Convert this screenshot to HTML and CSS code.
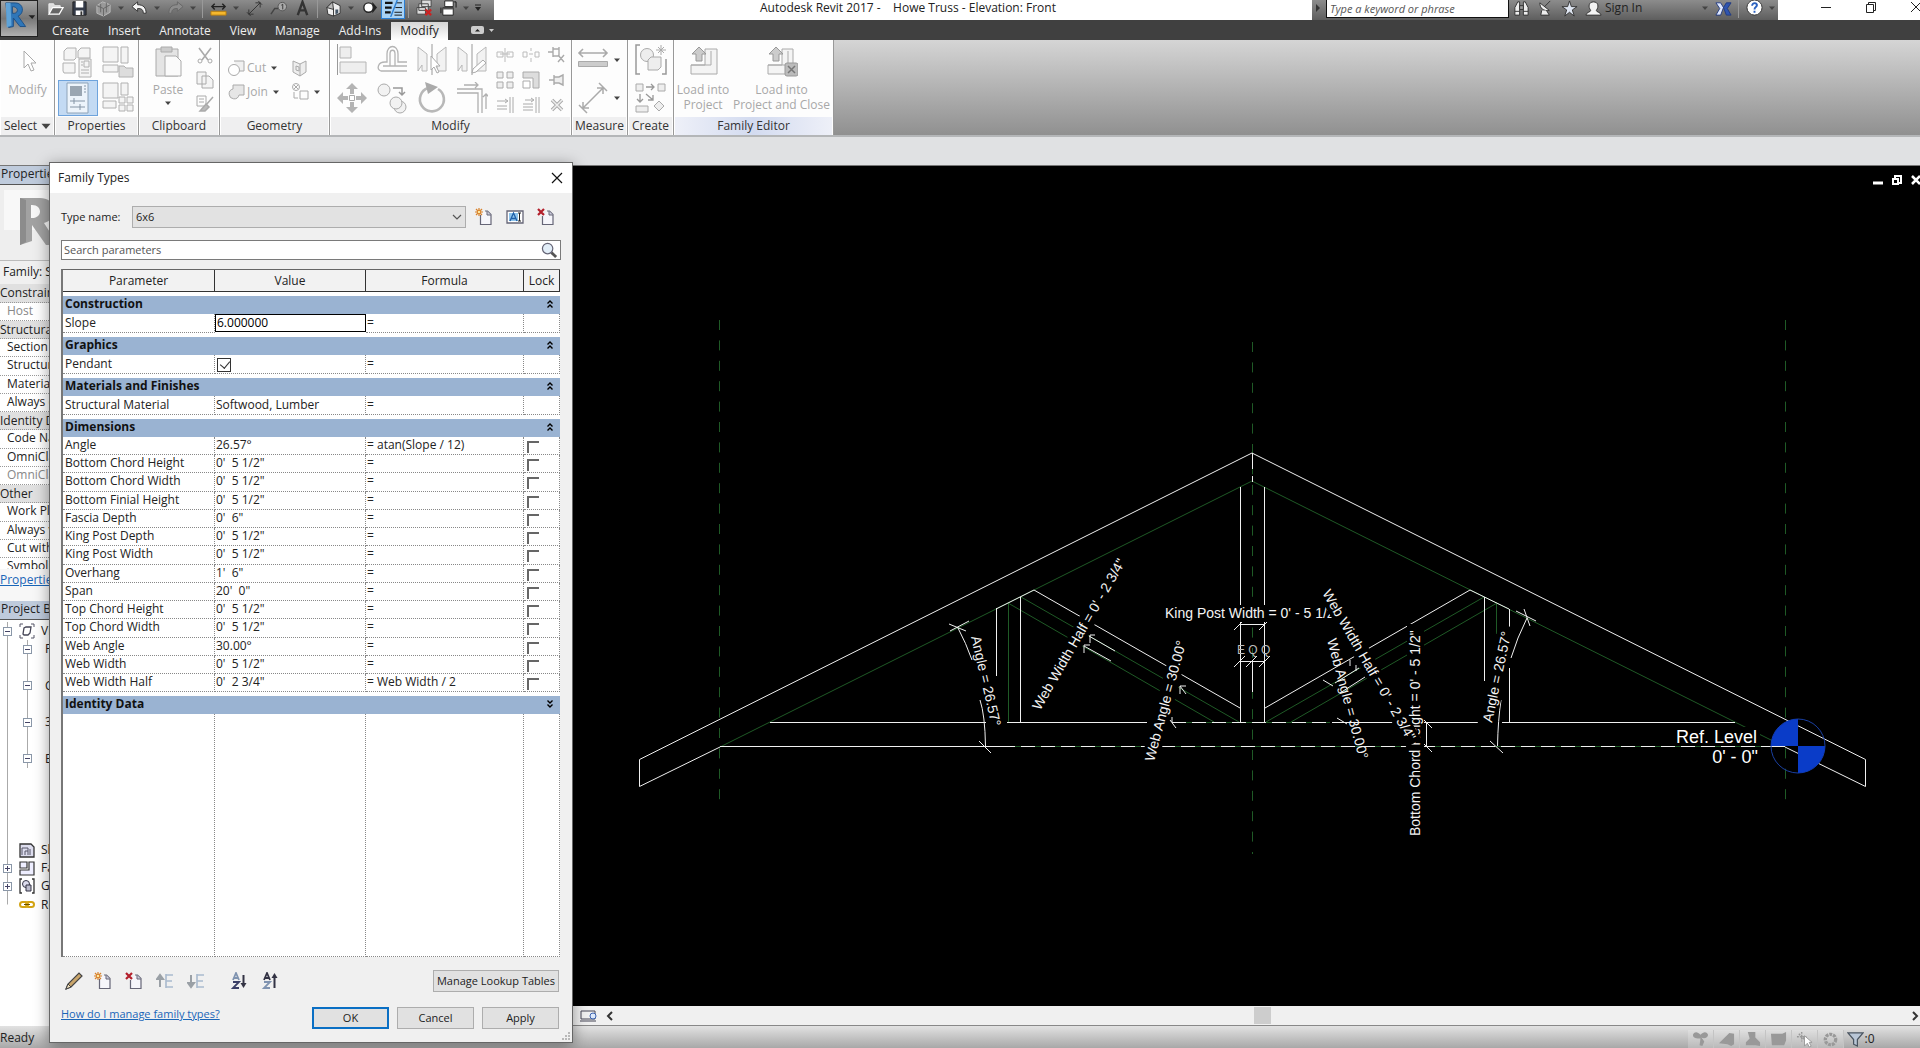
FILE: index.html
```html
<!DOCTYPE html>
<html lang="en">
<head>
    <meta charset="UTF-8">
    <meta name="viewport" content="width=device-width, initial-scale=1.0">
    <title>Autodesk Revit 2017 - Howe Truss - Elevation: Front</title>
    <link rel="stylesheet" href="styles.css">
</head>
<body>
    <!-- shared icons -->
    <svg class="sprite" aria-hidden="true">
        <symbol id="down" viewBox="0 0 8 8"><path d="M1 2.5h6L4 6z" fill="currentColor"/></symbol>
        <symbol id="new" viewBox="0 0 18 18"><path d="M5.500 7v9.500h10.500V6.500L12.500 3H10" fill="#f6f6fb" stroke="#667" stroke-width="1.200"/><path d="M12 3v4h4" fill="#ccd" stroke="#667"/><path d="M4 0v8M0 4h8M1 1l6 6M7 1L1 7" stroke="#d9822b" stroke-width="1.200"/><circle cx="4" cy="4" r="1.800" fill="#ffe9a0" stroke="#d9822b"/></symbol>
        <symbol id="del" viewBox="0 0 18 18"><path d="M5.500 8v8.500h10.500V6.500L12.500 3H10" fill="#f6f6fb" stroke="#667" stroke-width="1.200"/><path d="M12 3v4h4" fill="#ccd" stroke="#667"/><path d="M1 1l6 6M7 1L1 7" stroke="#b3202c" stroke-width="2.200"/></symbol>
        <symbol id="chev" viewBox="0 0 8 10"><path d="M1.500 4.500L4 2l2.500 2.500M1.500 8.500L4 6l2.500 2.500" fill="none" stroke="#000" stroke-width="1.400"/></symbol>
    </svg>

    <header class="titlebar">
        <div class="quick">
            <button class="q" aria-label="Open"><svg viewBox="0 0 18 18"><path d="M2 14V4h5l1 2h6v2" fill="#ddd" stroke="#eee"/><path d="M2 15l4-7h11l-4 7z" fill="#666" stroke="#fff" stroke-width="1.300"/></svg></button>
            <button class="q" aria-label="Save"><svg viewBox="0 0 18 18"><path d="M2 2h14v14H2z" fill="#333a48" stroke="#222"/><path d="M5 1h8v7H5zM5 11h8v5H5z" fill="#fff"/><path d="M10 12h2v4h-2z" fill="#333"/></svg></button>
            <button class="q dim" aria-label="Synchronize"><svg viewBox="0 0 18 18"><path d="M2 6l6-4 8 3v8l-7 4-7-3z" fill="#999" stroke="#bbb"/><path d="M2 6l7 3v8M9 9l7-4M6 4v9M12 3v10" stroke="#666" fill="none"/></svg></button>
            <svg class="arr"><use href="#down"/></svg>
            <button class="q left" aria-label="Undo"><svg viewBox="0 0 18 18"><path d="M1 7l6-5v3c6 0 9 3 9 9h-3c0-4-2-5-6-5v3z" fill="#f4f4f4" stroke="#333"/></svg></button>
            <svg class="arr"><use href="#down"/></svg>
            <button class="q" aria-label="Redo"><svg viewBox="0 0 18 18"><path d="M17 7l-6-5v3c-6 0-9 3-9 9h3c0-4 2-5 6-5v3z" fill="#8c8c8c" stroke="#666"/></svg></button>
            <svg class="arr"><use href="#down"/></svg>
            <i class="sep"></i>
            <button class="q" aria-label="Measure"><svg viewBox="0 0 18 18"><path d="M2 7h14M5 4L2 7l3 3M13 4l3 3-3 3" stroke="#222" stroke-width="1.500" fill="none"/><path d="M1 12h16v4H1z" fill="#f5b82e" stroke="#b87d10"/></svg></button>
            <svg class="arr"><use href="#down"/></svg>
            <button class="q" aria-label="Aligned dimension"><svg viewBox="0 0 18 18"><path d="M3 15L15 3M3 10v5h5M10 3h5v5M1 13l4 4M13 1l4 4" stroke="#333" fill="none"/></svg></button>
            <button class="q" aria-label="Tag by category"><svg viewBox="0 0 18 18"><path d="M1 15l4-6h4" stroke="#444" stroke-width="1.500" fill="none"/><circle cx="13" cy="7" r="4.500" fill="#aaa" stroke="#555"/><path d="M12 5.500l1.500-1v5.500" stroke="#333" fill="none"/></svg></button>
            <button class="q" aria-label="Text"><svg viewBox="0 0 18 18"><path d="M4 16L9 2l5 14M6 11h6" stroke="#333" stroke-width="2.500" fill="none"/></svg></button>
            <i class="sep"></i>
            <button class="q" aria-label="Default 3D view"><svg viewBox="0 0 18 18"><path d="M2 8l6-6 8 4v8l-7 3-6-2z" fill="#eee" stroke="#333"/><path d="M2 8l6-6 1 8zM9 9v8" fill="#bbb" stroke="#333"/><path d="M11 10h3v4l-3 1z" fill="#456"/></svg></button>
            <svg class="arr"><use href="#down"/></svg>
            <button class="q" aria-label="Section"><svg viewBox="0 0 18 18"><path d="M12 2l5 6-5 6z" fill="#222"/><circle cx="8" cy="8" r="5" fill="#fff" stroke="#222" stroke-width="1.500"/></svg></button>
            <button class="q on" aria-label="Thin lines"><svg viewBox="0 0 18 18"><path d="M0 3h8M0 8h7M0 13h6" stroke="#111" stroke-width="2.400"/><path d="M12 3h6M11 8h7M10 13h8M10 16h8" stroke="#111"/><path d="M13 0L6 18" stroke="#2b7fd4" stroke-width="1.500"/></svg></button>
            <i class="sep"></i>
            <button class="q" aria-label="Close hidden windows"><svg viewBox="0 0 18 18"><path d="M6 0h10v7H6zM3 4h10v7H3zM1 8h9v7H1z" fill="#ddd" stroke="#444"/><path d="M10 10l6 6M16 10l-6 6" stroke="#c22" stroke-width="2.400"/></svg></button>
            <button class="q" aria-label="Switch windows"><svg viewBox="0 0 18 18"><path d="M5 1h9v6H5zM3 8h11v8H3z" fill="#fff" stroke="#222"/><path d="M3 8h11v2H3z" fill="#555"/><path d="M15 2h2v6M1 14V8" stroke="#111" fill="none"/></svg></button>
            <svg class="arr"><use href="#down"/></svg>
            <svg class="arr"><path d="M1 1h6" stroke="#222"/><path d="M1 3h6L4 7z" fill="#222"/></svg>
        </div>
        <h1>Autodesk Revit 2017 - &nbsp;&nbsp; Howe Truss - Elevation: Front</h1>
        <div class="info">
            <svg class="play" viewBox="0 0 6 8"><path d="M1 0l4 4-4 4z" fill="#333"/></svg>
            <input class="keyword" type="text" aria-label="Search help" placeholder="Type a keyword or phrase">
            <button class="q" aria-label="Search"><svg viewBox="0 0 18 18"><path d="M2 16V8l3-6h2v14zM16 16V8l-3-6h-2v14z" fill="#eee" stroke="#333"/><path d="M7 6h4v4H7zM2 12h5M11 12h5" stroke="#333" fill="#999"/></svg></button>
            <button class="q" aria-label="Subscription"><svg viewBox="0 0 18 18"><path d="M3 3c0 6 4 9 10 8z" fill="#eee" stroke="#333"/><path d="M8 7l6-6M5 11l-1 5h9l-3-5" stroke="#333" fill="#eee"/></svg></button>
            <button class="q" aria-label="Favorites"><svg viewBox="0 0 18 18"><path d="M9 1l2 6h6l-5 3.500 2 6.500-5-4-5 4 2-6.500L1 7h6z" fill="#dfe6f2" stroke="#333"/></svg></button>
            <button class="q" aria-label="Account"><svg viewBox="0 0 18 18"><path d="M1 16c0-3 5-3 5-5-3-4-2-9 3-9s6 5 3 9c0 2 5 2 5 5z" fill="#f4f4f4" stroke="#333"/></svg></button>
            <button class="signin">Sign In</button>
            <svg class="arr"><use href="#down"/></svg>
            <button class="q" aria-label="Exchange apps"><svg viewBox="0 0 18 18"><path d="M1 3h5l3 5-3 8H1l4-7z" fill="#dfe8ff" stroke="#223a80"/><path d="M17 3h-5L9 8l3 8h5l-4-7z" fill="#2f55b0" stroke="#223a80"/></svg></button>
            <i class="sep"></i>
            <button class="q" aria-label="Help"><svg viewBox="0 0 18 18"><circle cx="9" cy="8" r="8" fill="#fff" stroke="#333"/><path d="M6.500 6c0-4 6-3 5 0-.5 1.500-2.500 1.500-2.500 4M9 11.500v2" fill="none" stroke="#2b62c0" stroke-width="2"/></svg></button>
            <svg class="arr"><use href="#down"/></svg>
        </div>
        <div class="winbtns">
            <button aria-label="Minimize"><svg viewBox="0 0 12 12"><path d="M1 6.500h10" stroke="#222"/></svg></button>
            <button aria-label="Restore"><svg viewBox="0 0 12 12"><path d="M1.500 3.500h7v8h-7zM3.500 3.500v-2h7v8h-2" fill="none" stroke="#222"/></svg></button>
            <button aria-label="Close"><svg viewBox="0 0 12 12"><path d="M1 1l10 10M11 1L1 11" stroke="#222"/></svg></button>
        </div>
        <button class="app" aria-label="Application menu">
            <svg viewBox="0 0 37 37"><path fill-rule="evenodd" d="M4 2h10c9 0 10 11 3 14l8 11h-6l-7-9v9l-5 1zM11 6v7c7 1 7-7 0-7z" fill="#2f76b8" stroke="#1b4f86"/><path d="M4 2h5l1 24-5 2z" fill="#5fa3d8"/><path d="M28 15h7l-3 4z" fill="#222"/></svg>
        </button>
    </header>

    <nav class="tabs">
        <a href="#">Create</a>
        <a href="#">Insert</a>
        <a href="#">Annotate</a>
        <a href="#">View</a>
        <a href="#">Manage</a>
        <a href="#">Add-Ins</a>
        <a href="#" class="active">Modify</a>
        <button class="cycle" aria-label="Minimize ribbon"><svg viewBox="0 0 24 10"><rect x="0" y="1" width="13" height="8" rx="2" fill="#ccc"/><path d="M4 6.500L6.500 4 9 6.500z" fill="#222"/><path d="M18 4h5l-2.500 3z" fill="#ccc"/></svg></button>
    </nav>

    <div class="ribbon">
        <section class="panel select">
            <div class="tools">
                <button class="big"><svg class="i32" viewBox="0 0 32 32"><path d="M12 6v17l4-4 3 7 3-1-3-7h5z" fill="#fff" stroke="#aaa"/></svg>Modify</button>
            </div>
            <h2>Select <svg class="arr"><use href="#down"/></svg></h2>
        </section>
        <section class="panel properties">
            <div class="tools grid2">
                <button aria-label="Family category"><svg class="i32" viewBox="0 0 32 32"><g fill="#f4f4f4" stroke="#b0b0b0"><path d="M2 5l3-3h9v10l-2 2H2zM16 5l3-3h9v10H16zM2 17h11v10H2l-1-2V17z"/><path d="M17 13h12v18H17z"/><path d="M22 15h5v6h-5zM19 24h8M19 27h8M19 16h2M19 19h2"/></g></svg></button>
                <button aria-label="Type properties"><svg class="i32" viewBox="0 0 32 32"><g fill="#f4f4f4" stroke="#b0b0b0"><path d="M1 1h15v15H1zM19 1h7v16h-7zM1 19h15v7H1z"/><path d="M17 20h5l2 2h7v9H17z" fill="#ddd"/></g></svg></button>
                <button class="on" aria-label="Properties"><svg class="i32" viewBox="0 0 32 32"><path d="M5 1h21v30H5z" fill="#edf4fb" stroke="#8ea3b8"/><path d="M8 4h12v10H8z" fill="#9aa6b2"/><path d="M22 4h2M22 7h2M22 10h2M8 19h15M8 25h15M12 16v6M18 22v6" stroke="#8494a5" fill="none"/></svg></button>
                <button aria-label="Family types"><svg class="i32" viewBox="0 0 32 32"><g fill="#f4f4f4" stroke="#b0b0b0"><path d="M1 1h15v15H1zM19 1h7v12h-7zM1 19h13v7H1z"/><path d="M17 15h6v6h-6zM25 15h6v6h-6zM17 23h6v6h-6zM25 23h6v6h-6z"/></g></svg></button>
            </div>
            <h2>Properties</h2>
        </section>
        <section class="panel clipboard">
            <div class="tools">
                <button class="big"><svg class="i32" viewBox="0 0 32 32"><g fill="#e4e4e4" stroke="#aaa"><path d="M4 4h22v27H4z"/><path d="M9 2h11v5H9z" fill="#ccc"/><path d="M13 11h11l5 5v15H13z" fill="#fafafa"/></g></svg>Paste<svg class="arr"><use href="#down"/></svg></button>
                <div class="col">
                    <button aria-label="Cut"><svg class="i18" viewBox="0 0 18 18"><path d="M3 1l9 12M15 1L6 13" stroke="#aaa" stroke-width="1.600"/><circle cx="4" cy="14" r="2" fill="none" stroke="#aaa"/><circle cx="14" cy="14" r="2" fill="none" stroke="#aaa"/></svg></button>
                    <button aria-label="Copy"><svg class="i18" viewBox="0 0 18 18"><path d="M1 1h9v12H1zM6 5h7l4 4v8H6z" fill="#f4f4f4" stroke="#aaa"/></svg></button>
                    <button aria-label="Match type"><svg class="i18" viewBox="0 0 18 18"><path d="M1 1h9v10H1zM3 4h5M3 7h5" fill="none" stroke="#aaa"/><path d="M17 2l-7 8M10 9l3 3-4 4H4z" fill="#bbb" stroke="#aaa" stroke-width="1.500"/></svg></button>
                </div>
            </div>
            <h2>Clipboard</h2>
        </section>
        <section class="panel geometry">
            <div class="tools">
                <div class="col wide">
                    <button class="row"><svg class="i18" viewBox="0 0 18 18"><path d="M7 2h10v10h-5" fill="#f0f0f0" stroke="#aaa"/><circle cx="7" cy="11" r="5.500" fill="#fff" stroke="#aaa"/></svg>Cut<svg class="arr"><use href="#down"/></svg></button>
                    <button class="row"><svg class="i18" viewBox="0 0 18 18"><path d="M6 2h11v10h-5a5 5 0 1 1-6-6z" fill="#e6e6e6" stroke="#aaa"/></svg>Join<svg class="arr"><use href="#down"/></svg></button>
                </div>
                <div class="col wide">
                    <button class="row" aria-label="Cope"><svg class="i18" viewBox="0 0 18 18"><path d="M2 2l7 3v12l-7-4zM9 5l6-3v11l-6 4M5 7l3 1v4l-3-1z" fill="#eee" stroke="#aaa"/></svg></button>
                    <button class="row" aria-label="Split face"><svg class="i18" viewBox="0 0 18 18"><circle cx="5" cy="4" r="3.500" fill="none" stroke="#aaa"/><path d="M3 2l4 4M7 2L3 6M3 9v6h4M9 8h8v8H9z" fill="none" stroke="#aaa"/></svg><svg class="arr"><use href="#down"/></svg></button>
                </div>
            </div>
            <h2>Geometry</h2>
        </section>
        <section class="panel modify">
            <div class="tools">
                <div class="grid4">
                    <button aria-label="Align"><svg class="i32" viewBox="0 0 32 32"><path d="M1.500 0v31" stroke="#999"/><path d="M4 3h11v11H4zM4 18h26v11H4z" fill="#eee" stroke="#b4b4b4"/></svg></button>
                    <button aria-label="Offset"><svg class="i32" viewBox="0 0 32 32"><path d="M31 27H5c-5-2-3-9 4-9h2V10c0-10 11-10 11 0v8h9M31 22H7M14 22V10c0-5 5-5 5 0v12" fill="none" stroke="#b4b4b4" stroke-width="1.300"/></svg></button>
                    <button aria-label="Mirror pick axis"><svg class="i32" viewBox="0 0 32 32"><path d="M2 3l9 7v17H6v-6L2 27zM30 3l-9 7v17h9z" fill="#f2f2f2" stroke="#b8b8b8"/><path d="M16 0v31" stroke="#999"/><path d="M15 12v14l3-3 3 6 2-1-3-6h4z" fill="#fff" stroke="#aaa"/></svg></button>
                    <button aria-label="Mirror draw axis"><svg class="i32" viewBox="0 0 32 32"><path d="M2 3l9 7v17H6v-6L2 27zM30 3l-9 7v17h9z" fill="#f2f2f2" stroke="#b8b8b8"/><path d="M16 0v31" stroke="#999"/><path d="M27 16l3 3-10 9-4 1 1-4z" fill="#fff" stroke="#aaa"/></svg></button>
                    <button aria-label="Move"><svg class="i32" viewBox="0 0 32 32"><path d="M16 1l6 6h-4v5h-4V7h-4zM16 31l6-6h-4v-5h-4v5h-4zM1 16l6-6v4h5v4H7v4zM31 16l-6-6v4h-5v4h5v4z" fill="#b4b4b4"/><path d="M13.500 13.500h5v5h-5z" fill="#fff" stroke="#aaa"/></svg></button>
                    <button aria-label="Copy"><svg class="i32" viewBox="0 0 32 32"><g fill="#f2f2f2" stroke="#aaa"><circle cx="8" cy="8" r="6"/><circle cx="24" cy="25" r="6"/><circle cx="20" cy="21" r="6"/></g><path d="M17 6h9v6M23 10l3 3 3-3" fill="none" stroke="#999" stroke-width="1.500"/></svg></button>
                    <button aria-label="Rotate"><svg class="i32" viewBox="0 0 32 32"><path d="M12 6a12 12 0 1 0 10 1" fill="none" stroke="#b8b8b8" stroke-width="2.600"/><path d="M9 0l13 5-10 7z" fill="#aaa"/></svg></button>
                    <button aria-label="Trim corner"><svg class="i32" viewBox="0 0 32 32"><path d="M1 7h25v24M1 11h21v20M8 3h14M19 0l3 3-3 3M30 27V12M27 15l3-3 3 3" fill="none" stroke="#b0b0b0" stroke-width="1.300"/></svg></button>
                </div>
                <div class="grid3">
                    <button aria-label="Split element"><svg class="i18" viewBox="0 0 18 18"><path d="M1 6h6v5H1zM11 6h6v5h-6zM9 2v14M4 8h10" fill="none" stroke="#bbb"/></svg></button>
                    <button aria-label="Split with gap"><svg class="i18" viewBox="0 0 18 18"><path d="M1 6h4v5H1zM13 6h4v5h-4zM7 8h4M9 2v3M9 12v4" fill="none" stroke="#bbb"/></svg></button>
                    <button aria-label="Unpin"><svg class="i18" viewBox="0 0 18 18"><path d="M0 6h5M5 1v10M5 3h6V1v9H5M10 9l6 7M16 9l-6 7" fill="none" stroke="#aaa" stroke-width="1.400"/></svg></button>
                    <button aria-label="Array"><svg class="i18" viewBox="0 0 18 18"><path d="M1 1h6v6H1zM11 1h6v6h-6zM1 11h6v6H1zM11 11h6v6h-6z" fill="#eee" stroke="#aaa"/></svg></button>
                    <button aria-label="Scale"><svg class="i18" viewBox="0 0 18 18"><path d="M1 1h16v16h-6V7H1z" fill="#ddd" stroke="#aaa"/><path d="M1 10h7v7H1z" fill="#fff" stroke="#aaa"/></svg></button>
                    <button aria-label="Pin"><svg class="i18" viewBox="0 0 18 18"><path d="M1 9h5M6 4v10M6 6h5l4-2v10l-4-2H6" fill="#eee" stroke="#aaa" stroke-width="1.400"/></svg></button>
                    <button aria-label="Trim single"><svg class="i18" viewBox="0 0 18 18"><path d="M1 5h10M9 3l3 2-3 2M1 10h10M1 13h10M14 1v16M17 1v16" fill="none" stroke="#aaa"/></svg></button>
                    <button aria-label="Trim multiple"><svg class="i18" viewBox="0 0 18 18"><path d="M3 4h8M9 2l3 2-3 2M1 8h10M1 11h10M1 14h10M14 1v16M17 1v16" fill="none" stroke="#aaa"/></svg></button>
                    <button aria-label="Delete"><svg class="i18" viewBox="0 0 18 18"><path d="M4 4l10 10M14 4L4 14" stroke="#aaa" stroke-width="3.500"/><path d="M4 4l10 10M14 4L4 14" stroke="#eee" stroke-width="1.500"/></svg></button>
                </div>
            </div>
            <h2>Modify</h2>
        </section>
        <section class="panel measure">
            <div class="tools">
                <div class="col">
                    <button class="row" aria-label="Measure"><svg class="i32" viewBox="0 0 32 32"><path d="M2 9h28M6 5L2 9l4 4M26 5l4 4-4 4" fill="none" stroke="#aaa" stroke-width="1.600"/><path d="M1.500 17.500h29v5h-29z" fill="#ccc" stroke="#aaa"/></svg><svg class="arr"><use href="#down"/></svg></button>
                    <button class="row" aria-label="Dimension"><svg class="i32" viewBox="0 0 32 32"><path d="M6 26L26 6M6 20v6h6M20 6h6v6M2 23l8 8M22 1l8 8" fill="none" stroke="#aaa" stroke-width="1.500"/></svg><svg class="arr"><use href="#down"/></svg></button>
                </div>
            </div>
            <h2>Measure</h2>
        </section>
        <section class="panel create">
            <div class="tools">
                <div class="col">
                    <button aria-label="Create group"><svg class="i32" viewBox="0 0 32 32"><path d="M5 1H1v29h4M27 30h4V15" fill="none" stroke="#999" stroke-width="1.500"/><g fill="#eee" stroke="#aaa"><circle cx="12" cy="11" r="6.500"/><path d="M13 16l3-3h10v10l-3 3H13z"/></g><path d="M26 1v10M21 6h10M23 3l6 6M29 3l-6 6" stroke="#aaa"/></svg></button>
                    <button aria-label="Create similar"><svg class="i32" viewBox="0 0 32 32"><path d="M1 2h7v7H1zM23 2h7v7h-7zM1 24h12v6H1zM24 19l5 5-5 5-5-5z" fill="#eee" stroke="#aaa"/><path d="M11 5h8M16 2l3 3-3 3M5 12v8M2 17l3 3 3-3M11 12l7 6M18 13v5h-5" fill="none" stroke="#999" stroke-width="1.300"/></svg></button>
                </div>
            </div>
            <h2>Create</h2>
        </section>
        <section class="panel family">
            <div class="tools">
                <button class="big"><svg class="i32" viewBox="0 0 32 32"><path d="M4 20h14V4h12v25H4z" fill="#f4f4f4" stroke="#aaa"/><path d="M4 20h20V6" fill="none" stroke="#aaa"/><path d="M12 2l7 7h-4v7H9V9H5z" fill="#ccc" stroke="#999"/></svg>Load into<br>Project</button>
                <button class="big"><svg class="i32" viewBox="0 0 32 32"><path d="M2 20h14V4h11v25H2z" fill="#f4f4f4" stroke="#aaa"/><path d="M2 20h20V6" fill="none" stroke="#aaa"/><path d="M10 2l7 7h-4v7H7V9H3z" fill="#ccc" stroke="#999"/><rect x="19" y="18" width="13" height="13" rx="2" fill="#bbb" stroke="#999"/><path d="M22 21l7 7M29 21l-7 7" stroke="#777" stroke-width="1.500"/></svg>Load into<br>Project and Close</button>
            </div>
            <h2>Family Editor</h2>
        </section>
    </div>
    <div class="optionsbar"></div>

    <main class="work">
        <aside class="side">
            <h3>Properties</h3>
            <div class="preview"><svg viewBox="0 0 60 60"><path d="M4 0h56v40H4z" fill="#f8f8f8"/><path fill-rule="evenodd" d="M20 8h20c18 0 18 22 4 25l14 22H46L32 35v16l-12 4zM31 15v13c12 1 12-14 0-13z" fill="#a2a2a2"/><path d="M20 8v47l6-3V10z" fill="#8c8c8c"/></svg></div>
            <div class="famline">Family: Structural</div>
            <div class="proplist">
                <div class="grp">Constraints</div>
                <div class="dis">Host</div>
                <div class="grp">Structural</div>
                <div>Section Shape</div>
                <div>Structural</div>
                <div>Material</div>
                <div>Always export</div>
                <div class="grp">Identity Data</div>
                <div>Code Name</div>
                <div>OmniClass</div>
                <div class="dis">OmniClass Title</div>
                <div class="grp">Other</div>
                <div>Work Plane</div>
                <div>Always vertical</div>
                <div>Cut with Voids</div>
                <div class="cutoff">Symbolic</div>
            </div>
            <div class="help"><a href="#">Properties help</a></div>
            <h3>Project Browser</h3>
            <ul class="tree">
                <li><i class="pm"></i><svg viewBox="0 0 16 16"><path d="M4 1H1v3M12 1h3v3M4 15H1v-3M12 15h3v-3" stroke="#556" fill="none"/><path d="M4 11l1-6 2-1h5l-1 6-2 2H5z" fill="none" stroke="#445" stroke-width="1.300"/></svg>Views (all)</li>
                <li class="sub"><i class="pm"></i><span>Floor Plans</span></li>
                <li class="sub line"></li>
                <li class="sub"><i class="pm"></i><span>Ceiling Plans</span></li>
                <li class="sub line"></li>
                <li class="sub"><i class="pm"></i><span>3D Views</span></li>
                <li class="sub line"></li>
                <li class="sub"><i class="pm"></i><span>Elevations</span></li>
                <li class="line"></li>
                <li class="line"></li>
                <li class="line"></li>
                <li class="line"></li>
                <li><i class="stub"></i><svg viewBox="0 0 16 16"><path d="M1 2h11l3 3v10H1z" fill="#dde" stroke="#333" stroke-width="1.300"/><path d="M3 13V6h6v7M6 13V9h3M11 7v6" fill="none" stroke="#556"/></svg>Sheets (all)</li>
                <li><i class="pm plus"></i><svg viewBox="0 0 16 16"><path d="M1 2h7v6H1zM10 2h5v13H1v-5h9z" fill="#eef" stroke="#333" stroke-width="1.200"/></svg>Families</li>
                <li><i class="pm plus"></i><svg viewBox="0 0 16 16"><path d="M3 1H1v14h2M13 1h2v14h-2" fill="none" stroke="#333" stroke-width="1.300"/><circle cx="7" cy="6" r="3.500" fill="#dde" stroke="#334"/><path d="M7 7h5v6H7z" fill="#bbc" stroke="#334"/></svg>Groups</li>
                <li><i class="stub"></i><svg viewBox="0 0 16 16"><rect x="1" y="5" width="8" height="5" rx="2.500" fill="none" stroke="#d3a413" stroke-width="2"/><rect x="7" y="5" width="8" height="5" rx="2.500" fill="none" stroke="#d3a413" stroke-width="2"/><path d="M5 7.500h6" stroke="#6b5200"/></svg>Revit Links</li>
            </ul>
        </aside>

        <div class="view">
            <svg class="canvas" viewBox="49 166 1871 840" role="img" aria-label="Howe truss front elevation">
                <!-- reference planes -->
                <g class="ref">
                    <path d="M719.500 320v480M1785.500 320v480M1252.500 342v512" stroke-dasharray="10 10.400"/>
                    <path d="M720 746.500h1050"/>
                </g>
                <g class="ref">
                    <path d="M720 747L1252 481L1785 747"/>
                    <path d="M1021 597L1239 722M1008 603L1214 722M1484 597L1266 722M1497 603L1291 722"/>
                    <path d="M1008.500 603V722M1496.500 603V634M1172 722.500h158"/>
                </g>
                <!-- members -->
                <g class="mem">
                    <path d="M720 747L639.500 786.500V759.500L1252 453L1865.500 759.500V786.500L1785 747"/>
                    <path d="M996 609L1034 590L1240 708M1509 609L1470 590L1265 708"/>
                    <path d="M1240.500 487V722M1264.500 487V722M1252.500 453v16M1252.500 476v6"/>
                    <path d="M996.500 608V676M1020.500 597V722M1484.500 597V681M1509.500 609V637M1509.500 668V722"/>
                    <path d="M770 722.500H986M1007 722.500H1147M1338 722.500H1480M1502 722.500H1735"/>
                    <path d="M720 746.500H1001"/>
                    <path d="M1001 746.500H1770M1172 722.500H1338" stroke-dasharray="14 6"/>
                    <path d="M1770 746.500H1785"/>
                </g>
                <!-- dimension lines -->
                <g class="mem">
                    <path d="M950 631L969 621M949 624l17 7M958 628Q966 643 972 660M980 700Q985 715 985.500 746M979 741l12 12M1516 611L1536 621M1524 609l6 17M1527 618Q1517 638 1511 658M1501 700Q1498 720 1497.500 746M1490 741l13 12"/>
                    <path d="M1240 624.500h25M1234 630l11-11M1259 630l11-11M1240 661.500h25M1234 667l11-11M1246 667l11-11M1259 667l11-11M1252.500 661v31"/>
                    <path d="M1089 636L1115 651M1084 646L1111 661M1090 643v-8h5M1084 653v-8h6M1180 694v-8h6M1180 686l6 8M1170 720l6 8M1172 722v-5"/>
                    <path d="M1323 680l10 6M1335 683L1359 668M1340 693L1365 677M1350 660v6M1356 665v6M1337 718l10 6M1426.500 722v24M1421 717l11 11M1421 741l11 11"/>
                </g>
                <!-- labels, each on its own mask -->
                <g class="lbl">
                    <g transform="translate(1165 618)"><rect x="-2" y="-13" width="180" height="17"/><text>King Post Width = 0' - 5 1/2"</text></g>
                    <g transform="translate(1237 654)"><text class="eq">E Q Q</text></g>
                    <g transform="translate(971 637) rotate(77)"><text>Angle = 26.57°</text></g>
                    <g transform="translate(1492 723) rotate(-78)"><rect x="-4" y="-14" width="102" height="18"/><text>Angle = 26.57°</text></g>
                    <g transform="translate(1040 711) rotate(-60)"><rect x="-2" y="-13" width="178" height="17"/><text>Web Width Half = 0' - 2 3/4"</text></g>
                    <g transform="translate(1154 762) rotate(-75)"><rect x="-2" y="-13" width="128" height="17"/><text>Web Angle = 30.00°</text></g>
                    <g transform="translate(1420 836) rotate(-90)"><rect x="-2" y="-13" width="214" height="17"/><text>Bottom Chord Height = 0' - 5 1/2"</text></g>
                    <g transform="translate(1327 640) rotate(75)"><text>Web Angle = 30.00°</text></g>
                    <g transform="translate(1322 593) rotate(60)"><rect x="-2" y="-13" width="178" height="17"/><text>Web Width Half = 0' - 2 3/4"</text></g>
                </g>
                <!-- level head -->
                <g>
                    <circle cx="1798" cy="746" r="27" fill="none" stroke="#1a3fa0"/>
                    <path d="M1798 746V719A27 27 0 0 0 1771 746zM1798 746V773A27 27 0 0 0 1825 746z" fill="#0a3cc8"/>
                    <g class="level">
                        <rect x="1672" y="727" width="88" height="18"/><rect x="1710" y="748" width="50" height="18"/>
                        <text x="1757" y="743">Ref. Level</text>
                        <text x="1758" y="763">0' - 0"</text>
                    </g>
                </g>
            </svg>
            <div class="mdi">
                <button aria-label="Minimize view"><svg viewBox="0 0 10 10"><path d="M0 8h10" stroke="#fff" stroke-width="3"/></svg></button>
                <button aria-label="Restore view"><svg viewBox="0 0 10 10"><path d="M1 4h5v5H1zM3 3V1h6v7H7" fill="none" stroke="#fff" stroke-width="2"/></svg></button>
                <button aria-label="Close view"><svg viewBox="0 0 10 10"><path d="M1 1l8 8M9 1L1 9" stroke="#fff" stroke-width="2.500"/></svg></button>
            </div>
            <div class="viewbar">
                <button aria-label="View properties"><svg viewBox="0 0 18 14"><path d="M1 2h14v8H1zM0 12h16" fill="none" stroke="#445"/><circle cx="13" cy="7" r="3" fill="#dce8fa" stroke="#3a62b0"/></svg></button>
                <button aria-label="Scroll left"><svg viewBox="0 0 8 10"><path d="M6 1L2 5l4 4" fill="none" stroke="#333" stroke-width="2"/></svg></button>
                <div class="track"><i class="thumb"></i></div>
                <button aria-label="Scroll right"><svg viewBox="0 0 8 10"><path d="M2 1l4 4-4 4" fill="none" stroke="#333" stroke-width="2"/></svg></button>
            </div>
        </div>
    </main>

    <footer class="status">
        <span>Ready</span>
        <div class="statusicons">
            <button aria-label="Select links"><svg viewBox="0 0 18 18"><path d="M1 4c2-4 5-3 8 0 3-3 6-4 8 0 0 4-5 4-7 3l3 4-2 5-3-1 1-7C5 8 1 8 1 4z" fill="#999"/></svg></button>
            <button aria-label="Select underlay"><svg viewBox="0 0 18 18"><path d="M1 13L12 2l5 1v11l-3 2-4-2z" fill="#999"/></svg></button>
            <button aria-label="Select pinned"><svg viewBox="0 0 18 18"><path d="M4 1h8v6l5 5v4l-5-1H2v-3l4-4z" fill="#999"/></svg></button>
            <button aria-label="Select by face"><svg viewBox="0 0 18 18"><path d="M1 3h12l4-2v9l-2 5H2z" fill="#999"/></svg></button>
            <button aria-label="Drag on selection"><svg viewBox="0 0 18 18"><path d="M6 1v10M1 6h10M3 3l6 6" stroke="#999" stroke-width="1.500" stroke-dasharray="2 1"/><path d="M9 5v11l3-3 2 4 2-1-2-4h3z" fill="#fff" stroke="#999"/></svg></button>
            <button aria-label="Background processes"><svg viewBox="0 0 18 18"><circle cx="9" cy="9" r="5.500" fill="none" stroke="#999" stroke-width="3.500" stroke-dasharray="3 1"/></svg></button>
            <button class="filter"><svg viewBox="0 0 18 18"><path d="M1 2h16l-6 7v7l-4-2V9z" fill="#b9c6d6" stroke="#4a5460" stroke-width="1.300"/></svg>:0</button>
        </div>
    </footer>

    <div class="dialog" role="dialog" aria-labelledby="dlg-title">
        <div class="dlg-head">
            <h2 id="dlg-title">Family Types</h2>
            <button aria-label="Close dialog"><svg viewBox="0 0 12 12"><path d="M1 1l10 10M11 1L1 11" stroke="#111" stroke-width="1.200"/></svg></button>
        </div>
        <div class="dlg-body">
            <div class="typerow">
                <label for="typename">Type name:</label>
                <div class="pick">
                    <select id="typename"><option>6x6</option></select>
                    <svg viewBox="0 0 10 6"><path d="M1 1l4 4 4-4" fill="none" stroke="#555" stroke-width="1.200"/></svg>
                </div>
                <button aria-label="New type"><svg><use href="#new"/></svg></button>
                <button aria-label="Rename type"><svg viewBox="0 0 18 18"><path d="M1 3h16v12H1z" fill="#fff" stroke="#667" stroke-width="1.300"/><path d="M3 5h9v8H3z" fill="#8fc4ec"/><path d="M4 13l3.500-8L11 13M5 10.500h5" fill="none" stroke="#1f5fa8" stroke-width="1.300"/><path d="M12 5h3M13.500 5v8M12 13h3" stroke="#222"/></svg></button>
                <button aria-label="Delete type"><svg><use href="#del"/></svg></button>
            </div>
            <div class="search">
                <input type="text" id="search" aria-label="Search parameters" placeholder="Search parameters">
                <svg viewBox="0 0 18 18"><path d="M11 11l5 5" stroke="#555" stroke-width="3"/><circle cx="7" cy="7" r="5.500" fill="#e2eef8" stroke="#667" stroke-width="1.300"/></svg>
            </div>
            <table class="params">
                <colgroup><col class="c1"><col class="c2"><col class="c3"><col class="c4"></colgroup>
                <thead>
                    <tr><th>Parameter</th><th>Value</th><th>Formula</th><th>Lock</th></tr>
                </thead>
                <tbody class="single">
                    <tr class="cat"><th colspan="4">Construction<svg><use href="#chev"/></svg></th></tr>
                    <tr><td>Slope</td><td class="edit"><input type="text" aria-label="Slope" value="6.000000"></td><td>=</td><td></td></tr>
                </tbody>
                <tbody class="single">
                    <tr class="cat"><th colspan="4">Graphics<svg><use href="#chev"/></svg></th></tr>
                    <tr><td>Pendant</td><td><input class="tick" type="checkbox" aria-label="Pendant" checked></td><td>=</td><td></td></tr>
                </tbody>
                <tbody class="single">
                    <tr class="cat"><th colspan="4">Materials and Finishes<svg><use href="#chev"/></svg></th></tr>
                    <tr><td>Structural Material</td><td>Softwood, Lumber</td><td>=</td><td></td></tr>
                </tbody>
                <tbody>
                    <tr class="cat"><th colspan="4">Dimensions<svg><use href="#chev"/></svg></th></tr>
                    <tr><td>Angle</td><td>26.57°</td><td>= atan(Slope / 12)</td><td><input class="lock" type="checkbox" aria-label="Lock Angle"></td></tr>
                    <tr><td>Bottom Chord Height</td><td>0'&nbsp; 5 1/2"</td><td>=</td><td><input class="lock" type="checkbox" aria-label="Lock Bottom Chord Height"></td></tr>
                    <tr><td>Bottom Chord Width</td><td>0'&nbsp; 5 1/2"</td><td>=</td><td><input class="lock" type="checkbox" aria-label="Lock Bottom Chord Width"></td></tr>
                    <tr><td>Bottom Finial Height</td><td>0'&nbsp; 5 1/2"</td><td>=</td><td><input class="lock" type="checkbox" aria-label="Lock Bottom Finial Height"></td></tr>
                    <tr><td>Fascia Depth</td><td>0'&nbsp; 6"</td><td>=</td><td><input class="lock" type="checkbox" aria-label="Lock Fascia Depth"></td></tr>
                    <tr><td>King Post Depth</td><td>0'&nbsp; 5 1/2"</td><td>=</td><td><input class="lock" type="checkbox" aria-label="Lock King Post Depth"></td></tr>
                    <tr><td>King Post Width</td><td>0'&nbsp; 5 1/2"</td><td>=</td><td><input class="lock" type="checkbox" aria-label="Lock King Post Width"></td></tr>
                    <tr><td>Overhang</td><td>1'&nbsp; 6"</td><td>=</td><td><input class="lock" type="checkbox" aria-label="Lock Overhang"></td></tr>
                    <tr><td>Span</td><td>20'&nbsp; 0"</td><td>=</td><td><input class="lock" type="checkbox" aria-label="Lock Span"></td></tr>
                    <tr><td>Top Chord Height</td><td>0'&nbsp; 5 1/2"</td><td>=</td><td><input class="lock" type="checkbox" aria-label="Lock Top Chord Height"></td></tr>
                    <tr><td>Top Chord Width</td><td>0'&nbsp; 5 1/2"</td><td>=</td><td><input class="lock" type="checkbox" aria-label="Lock Top Chord Width"></td></tr>
                    <tr><td>Web Angle</td><td>30.00°</td><td>=</td><td><input class="lock" type="checkbox" aria-label="Lock Web Angle"></td></tr>
                    <tr><td>Web Width</td><td>0'&nbsp; 5 1/2"</td><td>=</td><td><input class="lock" type="checkbox" aria-label="Lock Web Width"></td></tr>
                    <tr><td>Web Width Half</td><td>0'&nbsp; 2 3/4"</td><td>= Web Width / 2</td><td><input class="lock" type="checkbox" aria-label="Lock Web Width Half"></td></tr>
                </tbody>
                <tbody>
                    <tr class="cat"><th colspan="4">Identity Data<svg class="flip"><use href="#chev"/></svg></th></tr>
                    <tr class="rest"><td></td><td></td><td></td><td></td></tr>
                </tbody>
            </table>
            <div class="tablebar">
                <button aria-label="Edit parameter"><svg viewBox="0 0 18 18"><path d="M1 17l2-5L14 1l3 3L6 15z" fill="#c9a56a" stroke="#444" stroke-width="1.200"/><path d="M1 17l2-5 3 3z" fill="#f3e3c0" stroke="#444"/></svg></button>
                <button aria-label="New parameter"><svg><use href="#new"/></svg></button>
                <button aria-label="Delete parameter"><svg><use href="#del"/></svg></button>
                <button aria-label="Move up"><svg viewBox="0 0 18 18"><path d="M4 15V5M1 7l3-4 3 4z" stroke="#9aa0a6" stroke-width="2" fill="#9aa0a6"/><path d="M10 2v14M10 3h7M10 9h6M10 15h7" stroke="#a9bace" stroke-width="1.600" fill="none"/></svg></button>
                <button aria-label="Move down"><svg viewBox="0 0 18 18"><path d="M4 3v10M1 11l3 4 3-4z" stroke="#9aa0a6" stroke-width="2" fill="#9aa0a6"/><path d="M10 2v14M10 3h7M10 9h6M10 15h7" stroke="#a9bace" stroke-width="1.600" fill="none"/></svg></button>
                <button class="gapl" aria-label="Sort ascending"><svg viewBox="0 0 18 18"><path d="M3 8l3-7 3 7M4 6h4" fill="none" stroke="#7f93b0" stroke-width="1.800"/><path d="M3 10h6l-6 6h6" fill="none" stroke="#3a3f66" stroke-width="1.800"/><path d="M13.500 3v9" stroke="#334" stroke-width="2"/><path d="M10.500 11h6l-3 5z" fill="#334"/></svg></button>
                <button aria-label="Sort descending"><svg viewBox="0 0 18 18"><path d="M3 8l3-7 3 7M4 6h4" fill="none" stroke="#334" stroke-width="1.800"/><path d="M3 10h6l-6 6h6" fill="none" stroke="#7f93b0" stroke-width="1.800"/><path d="M13.500 6v10" stroke="#334" stroke-width="2"/><path d="M10.500 6h6l-3-5z" fill="#334"/></svg></button>
                <button class="btn lookup">Manage Lookup Tables</button>
            </div>
            <div class="actions">
                <a href="#">How do I manage family types?</a>
                <button class="btn ok">OK</button>
                <button class="btn">Cancel</button>
                <button class="btn">Apply</button>
            </div>
        </div>
        <svg class="grip" viewBox="0 0 9 9"><path d="M6 0h2v2H6zM3 3h2v2H3zM6 3h2v2H6zM0 6h2v2H0zM3 6h2v2H3zM6 6h2v2H6z" fill="#b8b8b8"/></svg>
    </div>
</body>
</html>
```
FILE: styles.css
```css
* {
    margin: 0;
    padding: 0;
    box-sizing: border-box;
}

body {
    position: relative;
    display: flex;
    flex-direction: column;
    height: 100vh;
    overflow: hidden;
    background: #e0e1e3;
    font-family: "Open Sans", "Noto Sans", sans-serif;
    font-size: 12px;
    line-height: 16px;
    color: #222;
}

button {
    border: 0;
    background: none;
    font: inherit;
    color: inherit;
    display: flex;
    align-items: center;
    justify-content: center;
}

svg {
    display: block;
    flex: none;
}

.sprite {
    position: absolute;
    width: 0;
    height: 0;
}

.arr {
    width: 8px;
    height: 8px;
    margin: 0 2px;
    color: #444;
}

/* title bar */
.titlebar {
    position: relative;
    display: flex;
    flex: none;
    height: 20px;
    background: #fff;
}

.quick, .info {
    display: flex;
    align-items: center;
    height: 20px;
    background: linear-gradient(#8c8c8c, #5e5e5e);
}

.quick {
    width: 494px;
    padding: 0 0 4px 43px;
}

.q {
    width: 24px;
    height: 20px;
    flex: none;
}

.q svg {
    width: 17px;
    height: 17px;
}

.quick .q.on {
    height: 22px;
    background: #a9d3f5;
    border: 1px solid #2b7fd4;
}

.sep {
    width: 1px;
    height: 20px;
    margin: 0 3px;
    background: #999;
}

.titlebar h1 {
    flex: 1;
    padding-left: 266px;
    font-size: 12px;
    font-weight: 400;
    line-height: 15px;
    white-space: pre;
}

.info {
    width: 466px;
    padding: 0 0 4px 3px;
}

.play {
    width: 6px;
    height: 8px;
}

.keyword {
    width: 183px;
    height: 20px;
    margin: 0 0 0 5px;
    padding: 0 3px;
    border: 1px solid #111;
    background: #fff;
    font: italic 11px/16px "Open Sans", "Noto Sans", sans-serif;
}

.keyword::placeholder {
    color: #555;
}

.signin {
    flex: 1;
    justify-content: flex-start;
}

.winbtns {
    display: flex;
    width: 142px;
    gap: 33px;
    padding-left: 42px;
    overflow: hidden;
}

.winbtns button {
    height: 13px;
}

.winbtns svg {
    width: 12px;
    height: 12px;
}

.app {
    position: absolute;
    left: 0;
    top: 0;
    z-index: 2;
    width: 38px;
    height: 37px;
    border: 1px solid #222;
    background: linear-gradient(#a5a5a5, #777 50%, #b0b0b0);
}

.app svg {
    width: 37px;
    height: 35px;
}

/* tabs */
.tabs {
    display: flex;
    flex: none;
    gap: 1px;
    height: 20px;
    padding-left: 43px;
    background: #404040;
}

.tabs a {
    padding: 2px 9px 0;
    font-size: 12px;
    line-height: 18px;
    color: #eee;
    text-decoration: none;
}

.tabs .active {
    margin-top: 2px;
    padding-top: 0;
    background: linear-gradient(#d5d5d5, #fff);
    color: #222;
}

.cycle {
    margin-left: 22px;
}

.cycle svg {
    width: 24px;
    height: 10px;
}

/* ribbon */
.ribbon {
    display: flex;
    flex: none;
    height: 97px;
    background: linear-gradient(#d5d5d5, #909090);
    border-bottom: 2px solid #b4b6b8;
    color: #a8a8a8;
}

.panel {
    display: flex;
    flex-direction: column;
    background: #fdfdfd;
    border-right: 1px solid #999;
    border-left: 1px solid #fff;
}

.panel h2 {
    display: flex;
    align-items: center;
    justify-content: center;
    height: 18px;
    margin-right: 1px;
    background: #efeff0;
    font-size: 12px;
    font-weight: 400;
    line-height: 18px;
    color: #333;
}

.tools {
    display: flex;
    flex: 1;
}

.select { width: 55px; }
.properties { width: 84px; }
.clipboard { width: 81px; }
.geometry { width: 110px; }
.modify { width: 242px; }
.measure { width: 56px; }
.create { width: 46px; }
.family { width: 160px; }

.family h2 {
    background: linear-gradient(90deg, #eef0f8, #d3dbf0 50%, #eef0f8);
}

.i32 {
    width: 32px;
    height: 32px;
}

.i18 {
    width: 18px;
    height: 18px;
}

.big {
    flex: 1;
    flex-direction: column;
    justify-content: flex-start;
    padding-top: 5px;
    line-height: 15px;
}

.big .i32 {
    margin-bottom: 5px;
}

.select h2 {
    justify-content: flex-start;
    padding-left: 3px;
}

.select h2 .arr {
    width: 12px;
    height: 12px;
    margin: 0 0 0 3px;
}

.grid2 {
    display: grid;
    grid-template-columns: 40px 40px;
    grid-template-rows: 37px 36px;
    padding-top: 3px;
    padding-left: 2px;
}

.tools .on {
    border: 1px solid #6ea3dc;
    background: #c3daf3;
}

.col {
    display: flex;
    flex-direction: column;
    justify-content: center;
    gap: 6px;
}

.clipboard .col {
    padding: 2px 5px 0 0;
}

.clipboard .big .arr {
    margin-top: 2px;
}

.row {
    justify-content: flex-start;
    gap: 4px;
}

.geometry .wide {
    width: 66px;
    padding: 3px 0 0 6px;
}

.geometry .wide + .wide {
    width: 42px;
    padding-left: 4px;
}

.geometry .row {
    gap: 2px;
}

.grid4 {
    display: grid;
    grid-template-columns: repeat(4, 40px);
    grid-template-rows: 38px 37px;
    padding: 1px 0 0 1px;
}

.grid3 {
    display: grid;
    grid-template-columns: repeat(3, 26px);
    grid-template-rows: repeat(3, 25px);
    padding-top: 2px;
}

.measure .col {
    padding-left: 4px;
}

.measure .row {
    gap: 2px;
}

.create .col {
    padding-left: 6px;
}

.family .big {
    flex: none;
    width: 56px;
}

.family .big + .big {
    width: 101px;
}

.optionsbar {
    flex: none;
    height: 28px;
    background: #e0e1e3;
}

/* work area */
.work {
    display: flex;
    flex: 1;
    min-height: 0;
    border-top: 1px solid #777;
}

.side {
    width: 49px;
    overflow: hidden;
    background: #f0f0f0;
    white-space: nowrap;
}

.side h3 {
    height: 19px;
    padding-left: 1px;
    border-bottom: 1px solid #555;
    background: #bfcbdc;
    font-size: 12px;
    font-weight: 400;
    line-height: 16px;
}

.preview {
    height: 76px;
    padding-top: 5px;
    border-bottom: 1px solid #bbb;
    background: #eee;
}

.preview svg {
    width: 60px;
    height: 60px;
}

.famline {
    height: 23px;
    padding: 3px 3px 0;
}

.proplist > div {
    height: 18px;
    padding-left: 7px;
    border-bottom: 1px dotted #999;
    background: #fff;
    line-height: 16px;
}

.proplist > div:nth-child(4n+1) {
    height: 19px;
}

.proplist > .grp {
    padding-left: 0;
    background: #e0e0e0;
    line-height: 18px;
}

.proplist > .dis {
    color: #888;
}

.proplist > .cutoff {
    height: 11px;
    overflow: hidden;
    border: 0;
}

.help {
    height: 32px;
    padding-top: 3px;
    background: #f7f7f7;
}

.help a, .actions a {
    color: #1a66b8;
    text-decoration: underline;
}

.tree {
    height: 407px;
    padding-top: 2px;
    list-style: none;
    background: #fff;
}

.tree li {
    display: flex;
    align-items: center;
    gap: 6px;
    height: 18px;
    padding-left: 3px;
    background: linear-gradient(#aaa, #aaa) 7px 0 / 1px 100% no-repeat;
}

.tree li:nth-child(4n) {
    height: 19px;
}

.tree li:last-child {
    background-size: 1px 50%;
}

.tree .sub {
    padding-left: 23px;
    background: linear-gradient(#aaa, #aaa) 7px 0 / 1px 100% no-repeat, linear-gradient(#aaa, #aaa) 27px 0 / 1px 100% no-repeat;
}

.tree .sub span {
    padding-left: 7px;
}

.tree svg {
    width: 16px;
    height: 16px;
    margin-left: 1px;
}

.pm {
    flex: none;
    width: 9px;
    height: 9px;
    border: 1px solid #8a97a8;
    background: linear-gradient(#446, #446) 1px 3px / 5px 1px no-repeat #fff;
}

.pm.plus {
    background: linear-gradient(#446, #446) 1px 3px / 5px 1px no-repeat, linear-gradient(#446, #446) 3px 1px / 1px 5px no-repeat #fff;
}

.stub {
    flex: none;
    width: 9px;
}

.view {
    position: relative;
    display: flex;
    flex-direction: column;
    flex: 1;
    min-width: 0;
    background: #000;
}

.canvas {
    flex: 1;
    min-height: 0;
    width: 100%;
}

.canvas path {
    fill: none;
    stroke-width: 1;
}

.canvas path[fill] {
    fill: #0a3cc8;
}

.ref {
    stroke: #1f5a26;
}

.mem {
    stroke: #f0f0f0;
}

.lbl text {
    font-family: "Liberation Sans", Arial, sans-serif;
    font-size: 14px;
    fill: #f4f4f4;
}

.lbl .eq {
    font-size: 12px;
    fill: #bbb;
}

.level text {
    font-family: "Liberation Sans", Arial, sans-serif;
    font-size: 18px;
    fill: #fff;
    text-anchor: end;
}

.mdi {
    position: absolute;
    top: 9px;
    right: -1px;
    display: flex;
    gap: 9px;
}

.mdi svg {
    width: 10px;
    height: 10px;
}

.viewbar {
    display: flex;
    align-items: center;
    height: 20px;
    padding-left: 531px;
    background: #f0f0f0;
    border-bottom: 1px solid #888;
}

.viewbar svg {
    width: 10px;
    height: 10px;
}

.viewbar button:first-child svg {
    width: 18px;
    height: 14px;
    margin-right: 7px;
}

.track {
    display: flex;
    justify-content: center;
    flex: 1;
    height: 17px;
}

.thumb {
    width: 17px;
    background: #cdcdcd;
}

/* status bar */
.status {
    display: flex;
    flex: none;
    justify-content: space-between;
    height: 22px;
    padding-top: 4px;
    background: linear-gradient(#e2e2e2, #a8a8a8);
}

.statusicons {
    display: flex;
    align-items: flex-start;
    padding-right: 43px;
}

.statusicons button {
    width: 26px;
    height: 18px;
    border-right: 1px solid #c4c4c4;
    background: rgba(255, 255, 255, 0.2);
}

.statusicons svg {
    width: 17px;
    height: 17px;
}

.statusicons .filter {
    width: 32px;
    margin-left: 1px;
    border: 0;
    background: none;
}

/* dialog */
.dialog {
    position: absolute;
    left: 49px;
    top: 162px;
    width: 524px;
    height: 881px;
    border: 1px solid #666;
    background: #f0f0f0;
    box-shadow: 0 3px 14px rgba(0, 0, 0, 0.4);
    display: flex;
    flex-direction: column;
}

.dlg-head {
    display: flex;
    align-items: center;
    justify-content: space-between;
    height: 30px;
    padding: 0 9px 0 8px;
    background: #fff;
}

.dlg-head h2 {
    font-size: 12px;
    font-weight: 400;
}

.dlg-head svg {
    width: 12px;
    height: 12px;
}

.dlg-body {
    padding: 13px 11px 0 11px;
}

.typerow {
    display: flex;
    align-items: center;
    height: 22px;
}

.typerow label {
    width: 71px;
    font-size: 11px;
}

.typerow button {
    width: 31px;
}

.typerow button svg, .tablebar svg {
    width: 18px;
    height: 18px;
}

.pick {
    display: flex;
    position: relative;
    flex: 1;
    margin-right: 2px;
}

.pick select {
    width: 100%;
    height: 22px;
    padding: 0 3px;
    appearance: none;
    border: 1px solid #adadad;
    border-radius: 0;
    background: #e2e2e2;
    font: inherit;
    font-size: 11px;
    color: #222;
}

.pick svg {
    position: absolute;
    right: 4px;
    top: 8px;
    width: 10px;
    height: 6px;
}

.search {
    display: flex;
    align-items: center;
    height: 20px;
    margin: 12px 0 9px;
    padding-right: 2px;
    border: 1px solid #7a7a7a;
    background: #fff;
}

.search input {
    flex: 1;
    border: 0;
    padding: 0 2px;
    font: inherit;
    font-size: 11px;
}

.search input::placeholder {
    color: #555;
}

.search svg {
    width: 17px;
    height: 17px;
}

.params {
    table-layout: fixed;
    width: 499px;
    border-collapse: separate;
    border-spacing: 0;
    border-top: 1px solid #666;
    border-left: 2px solid #777;
    background: #fff;
}

.c1 { width: 152px; }
.c2 { width: 151px; }
.c3 { width: 158px; }
.c4 { width: 36px; }

.params thead th {
    height: 22px;
    padding-top: 1px;
    border-right: 1px solid #333;
    border-bottom: 1px solid #333;
    background: #f2f2f2;
    font-weight: 400;
}

.params td {
    height: 18px;
    padding: 0 0 0 2px;
    border-right: 1px dotted #888;
    border-bottom: 1px dotted #888;
    line-height: 16px;
    white-space: nowrap;
    vertical-align: top;
}

.params td + td {
    padding-left: 1px;
}

.params .single td, .params tr:nth-child(4n) td {
    height: 19px;
}

.params .single td {
    line-height: 18px;
}

.cat th {
    height: 22px;
    padding: 0 0 0 2px;
    border-top: 4px solid #fff;
    background: #9ab3d2;
    line-height: 16px;
    font-weight: 700;
    text-align: left;
    vertical-align: top;
    color: #111;
}

.cat svg {
    float: right;
    width: 8px;
    height: 10px;
    margin: 3px 6px 0 0;
}

.cat .flip {
    transform: rotate(180deg);
}

.params .rest td {
    height: 243px;
}

.params .single .edit {
    padding: 0;
    border: 0;
}

.edit input {
    display: block;
    width: 100%;
    height: 18px;
    padding: 0 0 1px 1px;
    border: 1px solid #000;
    font: inherit;
}

.tick {
    appearance: none;
    display: block;
    width: 14px;
    height: 14px;
    margin: 3px 0 0 1px;
    border: 1px solid #333;
    background: #fff;
}

.tick:checked::after {
    content: "";
    display: block;
    width: 5px;
    height: 8px;
    margin: 0 0 0 4px;
    border: solid #333;
    border-width: 0 1px 1px 0;
    transform: rotate(40deg);
}

.lock {
    appearance: none;
    display: block;
    width: 12px;
    height: 12px;
    margin: 4px 0 0 2px;
    border: solid #666;
    border-width: 2px 0 0 2px;
}

.tablebar {
    display: flex;
    align-items: center;
    height: 22px;
    margin-top: 13px;
    padding-right: 2px;
}

.tablebar button {
    width: 30px;
    margin-right: 1px;
}

.tablebar button:first-child {
    width: 26px;
}

.tablebar .gapl {
    margin-left: 12px;
}

.btn, .tablebar .lookup {
    width: 77px;
    height: 22px;
    border: 1px solid #adadad;
    background: #e1e1e1;
    font-size: 11px;
    white-space: nowrap;
}

.tablebar .lookup {
    width: 126px;
    margin: 0 0 0 auto;
}

.actions {
    display: flex;
    gap: 8px;
    margin-top: 15px;
    padding-right: 2px;
}

.actions a {
    flex: 1;
    font-size: 11px;
    line-height: 14px;
}

.actions .ok {
    border: 2px solid #0a6fc4;
}

.grip {
    position: absolute;
    right: 1px;
    bottom: 1px;
    width: 9px;
    height: 9px;
}
```
